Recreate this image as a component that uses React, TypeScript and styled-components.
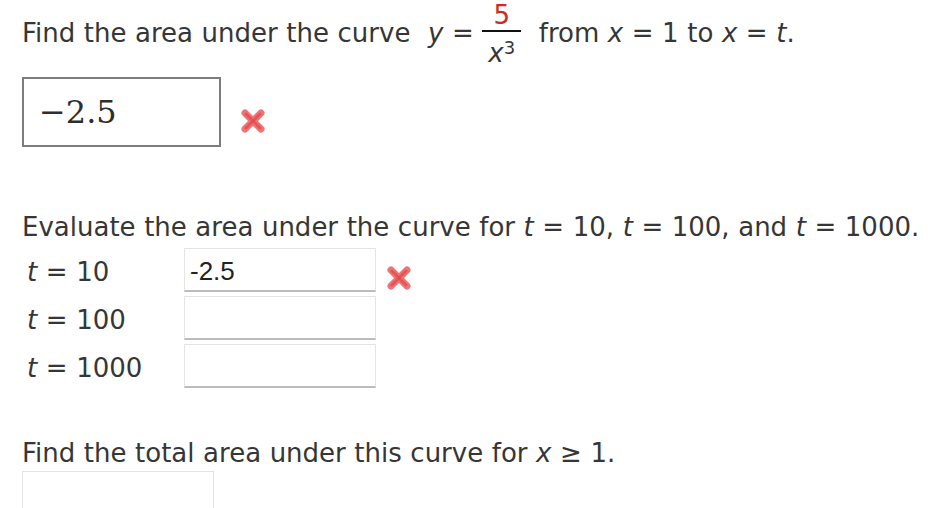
import React from "react";
import styled, { createGlobalStyle } from "styled-components";

const Global = createGlobalStyle`
  html, body { margin: 0; padding: 0; background: #fff; }
  body {
    font-family: "DejaVu Sans", Verdana, sans-serif;
    font-size: 26px;
    color: #363636;
  }
`;

const Page = styled.div`
  padding: 2px 0 0 22px;
  width: 928px;
`;

const Line = styled.div<{ $mt?: number }>`
  line-height: 30px;
  margin-top: ${(p) => p.$mt ?? 0}px;
  white-space: nowrap;
  word-spacing: 0.3px;
`;

const V = styled.i`
  font-style: italic;
`;

const Math = styled.span<{ $ml?: number }>`
  margin-left: ${(p) => p.$ml ?? 0}px;
`;

const Frac = styled.span`
  display: inline-flex;
  flex-direction: column;
  align-items: stretch;
  vertical-align: 18px;
  margin: 0 9px 0 0;
`;

const Num = styled.span`
  line-height: 26px;
  text-align: center;
  color: #cf2b22;
`;

const Bar = styled.span`
  height: 2px;
  margin-top: 2px;
  background: #111;
`;

const Den = styled.span`
  line-height: 30px;
  margin-top: 6px;
  padding: 0 6px;
  text-align: center;
`;

const Sup = styled.span`
  font-size: 18px;
  line-height: 0;
  vertical-align: 8px;
`;

const AnswerRow = styled.div<{ $mt?: number }>`
  display: flex;
  align-items: flex-start;
  margin-top: ${(p) => p.$mt ?? 0}px;
`;

const MathBox = styled.div`
  box-sizing: border-box;
  width: 199px;
  height: 70px;
  border: 2px solid #7d7d7d;
  display: flex;
  align-items: center;
  padding-left: 15px;
  font-family: "DejaVu Serif", "Liberation Serif", serif;
  font-size: 32px;
  color: #2e2e2e;
`;

const Cross = styled.svg<{ $mt: number; $ml: number }>`
  display: block;
  width: 26px;
  height: 26px;
  margin-top: ${(p) => p.$mt}px;
  margin-left: ${(p) => p.$ml}px;
  flex-shrink: 0;
`;

const XIcon = ({ mt, ml }: { mt: number; ml: number }) => (
  <Cross $mt={mt} $ml={ml} viewBox="0 0 26 26">
    <g strokeLinecap="round">
      <line x1="5" y1="5" x2="21" y2="21" stroke="#ee7476" strokeWidth="7" />
      <line x1="21" y1="5" x2="5" y2="21" stroke="#ee7476" strokeWidth="7" />
      <line x1="6" y1="6" x2="20" y2="20" stroke="#e0494b" strokeWidth="3" opacity="0.7" />
      <line x1="20" y1="6" x2="6" y2="20" stroke="#e0494b" strokeWidth="3" opacity="0.7" />
    </g>
  </Cross>
);

const Grid = styled.div`
  display: grid;
  grid-template-columns: 162px 192px auto;
  grid-auto-rows: 44px;
  row-gap: 4px;
  margin-top: 6px;
`;

const Label = styled.div`
  align-self: center;
  padding: 3px 0 0 5px;
  line-height: 30px;
  white-space: nowrap;
  word-spacing: 0.3px;
`;

const Field = styled.input`
  box-sizing: border-box;
  width: 192px;
  height: 44px;
  margin: 0;
  padding: 3px 5px 0;
  border: 1px solid #e4e4e4;
  border-bottom: 2px solid #bcbcbc;
  border-radius: 0;
  outline: none;
  background: #fff;
  font-family: "Liberation Sans", Arial, sans-serif;
  font-size: 26px;
  color: #222;
`;

const IconCell = styled.div`
  display: flex;
  align-items: center;
`;

const BottomField = styled(Field)`
  margin-top: 3px;
  border-bottom: 1px solid #e4e4e4;
`;

const rows = [
  { t: "10", value: "-2.5", wrong: true },
  { t: "100", value: "", wrong: false },
  { t: "1000", value: "", wrong: false },
];

export default function App() {
  return (
    <>
      <Global />
      <Page>
        <Line>
          Find the area under the curve{" "}
          <Math $ml={9}>
            <V>y</V> =
          </Math>{" "}
          <Frac>
            <Num>5</Num>
            <Bar />
            <Den>
              <V>x</V>
              <Sup>3</Sup>
            </Den>
          </Frac>{" "}
          from <V>x</V> = 1 to <V>x</V> = <V>t</V>.
        </Line>

        <AnswerRow $mt={9}>
          <MathBox>−2.5</MathBox>
          <XIcon mt={31} ml={19} />
        </AnswerRow>

        <Line $mt={65}>
          Evaluate the area under the curve for <V>t</V> = 10, <V>t</V> = 100, and <V>t</V> = 1000.
        </Line>

        <Grid>
          {rows.map((r) => (
            <React.Fragment key={r.t}>
              <Label>
                <V>t</V> = {r.t}
              </Label>
              <Field readOnly defaultValue={r.value} />
              <IconCell>{r.wrong && <XIcon mt={15} ml={10} />}</IconCell>
            </React.Fragment>
          ))}
        </Grid>

        <Line $mt={50}>
          Find the total area under this curve for <V>x</V> ≥ 1.
        </Line>
        <BottomField readOnly defaultValue="" />
      </Page>
    </>
  );
}
